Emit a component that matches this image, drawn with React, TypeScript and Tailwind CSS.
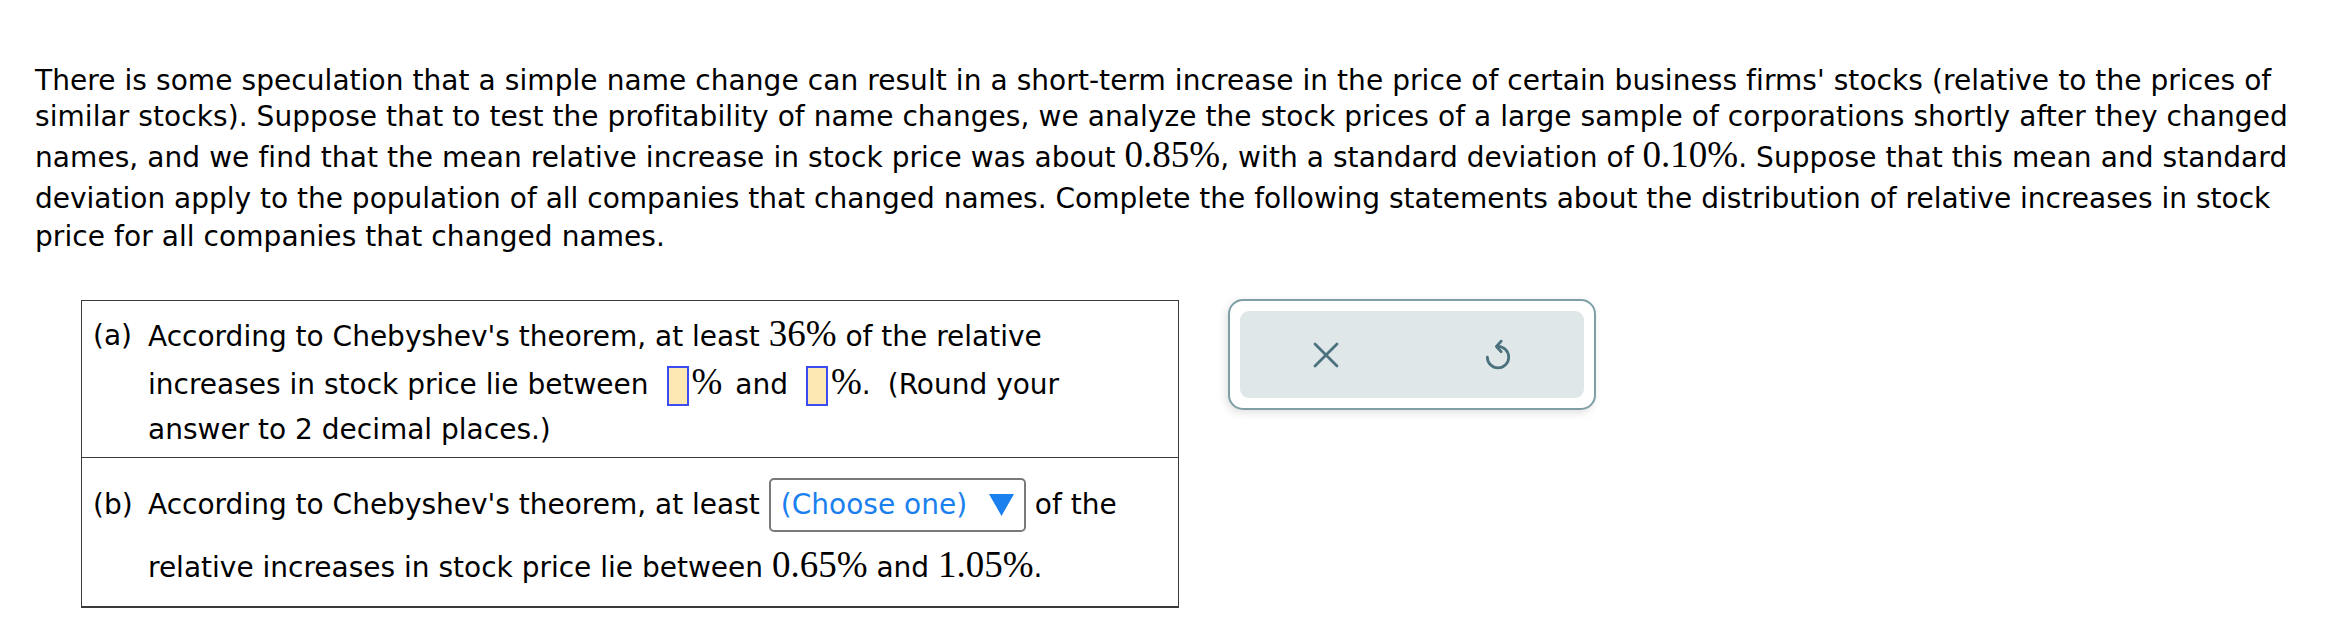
import React, { useState } from 'react'

const sans = "font-['DejaVu_Sans',Verdana,sans-serif]"
const serif = "font-['Liberation_Serif','Times_New_Roman',serif]"

function M({ children, className = '' }: { children: React.ReactNode; className?: string }) {
  return <span className={`${serif} text-[37px] leading-none tracking-normal ${className}`}>{children}</span>
}

function Blank({ className = '' }: { className?: string }) {
  return (
    <span className={`inline-block w-[22px] h-[40px] align-middle bg-[#fde8b4] border-2 border-[#3a4cf2] ${className}`} />
  )
}

function ChooseOne() {
  const [open, setOpen] = useState(false)
  return (
    <button
      onClick={() => setOpen(o => !o)}
      className="inline-flex items-center h-[54px] w-[257px] pl-[10px] pr-[10px] mx-[9px] border-2 border-[#7a7a7a] rounded-[5px] bg-white text-[#1a80ee] cursor-pointer"
    >
      <span className="flex-1 text-left">(Choose one)</span>
      <svg width="25" height="22" viewBox="0 0 25 22" className="shrink-0">
        <polygon points="0,0 25,0 12.5,22" fill="#1a80ee" />
      </svg>
    </button>
  )
}

function XIcon() {
  return (
    <svg width="26" height="26" viewBox="0 0 26 26" fill="none" stroke="#4a717d" strokeWidth="2.8" strokeLinecap="round">
      <path d="M2 2 L24 24 M24 2 L2 24" />
    </svg>
  )
}

function UndoIcon() {
  return (
    <svg width="30" height="32" viewBox="0 0 28 30" fill="none" stroke="#4a717d" strokeWidth="2.6" strokeLinecap="round" strokeLinejoin="round">
      <path d="M13 7 H14 A10 10 0 1 1 4 17" />
      <path d="M17 2 L12.5 7 L17 12" />
    </svg>
  )
}

export default function App() {
  return (
    <div className={`${sans} text-[28px] text-black bg-white min-h-[631px] pl-[35px] pt-[63px]`}>
      {/* problem statement */}
      <div className="whitespace-nowrap tracking-[0.07px]">
        <div className="h-[36px] flex items-center">
          There is some speculation that a simple name change can result in a short-term increase in the price of certain business firms' stocks (relative to the prices of
        </div>
        <div className="h-[36px] flex items-center">
          similar stocks). Suppose that to test the profitability of name changes, we analyze the stock prices of a large sample of corporations shortly after they changed
        </div>
        <div className="h-[44px] flex items-center">
          <span>
            names, and we find that the mean relative increase in stock price was about <M>0.85%</M>, with a standard deviation of <M>0.10%</M>. Suppose that this mean and standard
          </span>
        </div>
        <div className="h-[40px] flex items-center tracking-normal">
          deviation apply to the population of all companies that changed names. Complete the following statements about the distribution of relative increases in stock
        </div>
        <div className="h-[36px] flex items-center">price for all companies that changed names.</div>
      </div>

      <div className="flex items-start gap-[49px] mt-[45px] ml-[46px]">
        {/* question box */}
        <div className="w-[1098px] border border-[#3a3a3a] border-b-2 whitespace-nowrap">
          <div className="pt-[11px] pb-[5px] pl-[11px] flex">
            <div className="w-[55px] shrink-0 h-[48px] flex items-center">(a)</div>
            <div>
              <div className="h-[48px] flex items-center">
                <span>According to Chebyshev's theorem, at least <M>36%</M> of the relative</span>
              </div>
              <div className="h-[48px] flex items-center">
                <span>
                  increases in stock price lie between
                  <Blank className="ml-[18px]" />
                  <M className="ml-[3px]">%</M>
                  <span className="ml-[13px]">and</span>
                  <Blank className="ml-[18px]" />
                  <M className="ml-[3px]">%</M>.
                  <span className="ml-[17px]">(Round your</span>
                </span>
              </div>
              <div className="h-[44px] flex items-center">answer to 2 decimal places.)</div>
            </div>
          </div>
          <div className="border-t border-[#3a3a3a] pt-[20px] pb-[19px] pl-[11px] flex">
            <div className="w-[55px] shrink-0 h-[54px] flex items-center">(b)</div>
            <div>
              <div className="h-[54px] flex items-center">
                According to Chebyshev's theorem, at least
                <ChooseOne />
                of the
              </div>
              <div className="h-[40px] mt-[15px] flex items-center">
                <span>relative increases in stock price lie between <M>0.65%</M> and <M>1.05%</M>.</span>
              </div>
            </div>
          </div>
        </div>

        {/* action panel */}
        <div className="w-[368px] h-[111px] -mt-[1px] border-2 border-[#7f9ea6] rounded-[15px] p-[10px] bg-white shadow-[-2px_3px_8px_rgba(0,0,0,0.12)]">
          <div className="h-full bg-[#e0e7e9] rounded-[9px] grid grid-cols-2">
            <button className="flex items-center justify-center cursor-pointer" aria-label="Clear">
              <XIcon />
            </button>
            <button className="flex items-center justify-center cursor-pointer" aria-label="Reset">
              <UndoIcon />
            </button>
          </div>
        </div>
      </div>
    </div>
  )
}
